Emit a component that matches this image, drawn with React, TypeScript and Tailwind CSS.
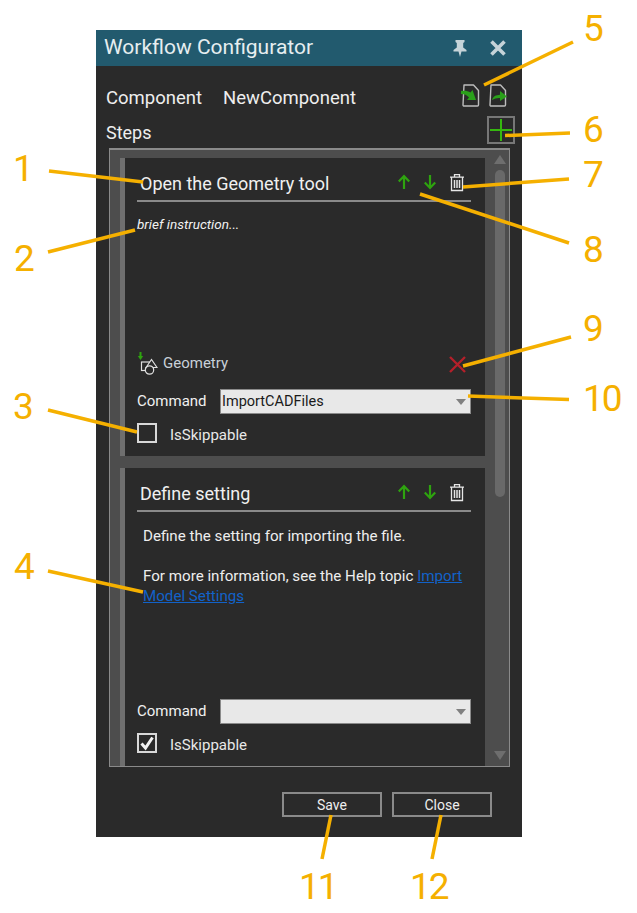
import React from 'react';

// Callout numbers around the dialog: [label, left, top]
const callouts: [string, number, number][] = [
  ['1', 13, 147],
  ['2', 14, 237],
  ['3', 13, 385],
  ['4', 14, 545],
  ['5', 583, 7],
  ['6', 583, 108],
  ['7', 583, 153],
  ['8', 583, 228],
  ['9', 583, 307],
  ['10', 583, 377],
  ['11', 299, 865],
  ['12', 410, 865],
];

const calloutLines = [
  [49, 171, 143, 182],
  [48, 252, 135, 230],
  [48, 410, 137, 432],
  [48, 571, 143, 592],
  [573, 42, 484, 85],
  [570, 133, 505, 135.5],
  [569, 179, 463, 187],
  [569, 243, 420, 194],
  [571, 337, 463, 366],
  [569, 399.5, 468, 396],
  [331, 815, 322, 859],
  [441, 815, 432, 859],
];

const ArrowUp = () => (
  <svg width="14" height="16" viewBox="0 0 14 16" fill="none" stroke="#2ea30f" strokeWidth="2.2">
    <path d="M7 15V2M1.8 7.5 7 2l5.2 5.5" />
  </svg>
);

const ArrowDown = () => (
  <svg width="14" height="16" viewBox="0 0 14 16" fill="none" stroke="#2ea30f" strokeWidth="2.2">
    <path d="M7 1v13M1.8 8.5 7 14l5.2-5.5" />
  </svg>
);

const Trash = () => (
  <svg width="16" height="19" viewBox="0 0 16 19" fill="none" stroke="#e6e6e6" strokeWidth="1.3">
    <path d="M1 4.2h14M5.5 4V1.6h5V4M2.5 4.5v13h11v-13" />
    <path d="M5.5 7v8M8 7v8M10.5 7v8" strokeWidth="1.5" />
  </svg>
);

const StepHeader = ({ title }: { title: string }) => (
  <div className="flex items-center h-[44px] pt-[6px] border-b-2 border-[#8a8a8a] pl-[3px] pr-[6px]">
    <span className="flex-1 pt-[4px] text-[18px] text-[#f0f0f0] leading-none">{title}</span>
    <div className="flex items-center gap-[12px]">
      <ArrowUp />
      <ArrowDown />
      <Trash />
    </div>
  </div>
);

const CommandRow = ({ value }: { value: string }) => (
  <div className="flex items-center">
    <span className="w-[83px] text-[15px] text-[#f0f0f0]">Command</span>
    <div className="flex items-center w-[251px] h-[25px] bg-[#e8e8e8] border border-[#8a8a8a] pl-[1px] pr-[4px]">
      <span className="flex-1 text-[14.5px] text-[#1a1a1a] leading-none pt-[2px]">{value}</span>
      <span className="w-0 h-0 border-x-[5px] border-x-transparent border-t-[6px] border-t-[#808080]" />
    </div>
  </div>
);

const SkipRow = ({ checked }: { checked?: boolean }) => (
  <div className="flex items-start mt-[9px]">
    <div className="flex items-center justify-center w-[20px] h-[20px] border-2 border-[#d8d8d8]">
      {checked && (
        <svg width="16" height="16" viewBox="0 0 16 16" fill="none" stroke="#f2f2f2" strokeWidth="3">
          <path d="M2.5 8.5 6.5 13 13.5 2.5" />
        </svg>
      )}
    </div>
    <span className="ml-[13px] pt-[1px] text-[15px] text-[#e8e8e8]">IsSkippable</span>
  </div>
);

const GeometryIcon = () => (
  <svg width="21" height="24" viewBox="0 0 21 24" fill="none" stroke="#e0e0e0" strokeWidth="1.2">
    <path d="M3.5 1v5" stroke="#2ea30f" strokeWidth="2" />
    <path d="M.8 5 3.5 9 6.2 5z" fill="#2ea30f" stroke="none" />
    <rect x="4.500" y="11" width="8" height="8.500" />
    <path d="M9 16.500 14.500 8.500l5.500 8z" fill="#2a2a2a" />
    <circle cx="12.500" cy="19" r="4.200" fill="#2a2a2a" />
  </svg>
);

const FileIcon = ({ flip }: { flip?: boolean }) => (
  <svg width="20" height="23" viewBox="0 0 20 23" fill="none">
    <path d="M3 1h9.500l5 5.500V21a1 1 0 0 1-1 1H3a1 1 0 0 1-1-1z" stroke="#bdbdbd" strokeWidth="1.4" strokeLinejoin="round" />
    {flip ? (
      <path d="M4 16c1-3.500 4-5 8-5.200V7l7 5.500-7 4.500v-3c-3-.2-5.500.5-8 2z" fill="#2aa01a" />
    ) : (
      <path d="M0 7c4-.5 7 0 9.500 1.500L11.500 6 15 16H6l2-2.500C6 11 3.500 10 0 10z" fill="#2aa01a" />
    )}
  </svg>
);

export default function App() {
  return (
    <div className="relative w-[637px] h-[913px] overflow-hidden bg-white pt-[30px] pl-[96px] font-['Roboto',sans-serif]">
      <div className="flex flex-col w-[426px] h-[807px] bg-[#2a2a2a]">
        {/* title bar */}
        <div className="flex items-center h-[36px] bg-[#225a6e] pl-[8px] pr-[16px] shrink-0">
          <span className="flex-1 pb-[2px] text-[21px] text-[#e6eef0] leading-none">Workflow Configurator</span>
          <svg width="14" height="17" viewBox="0 0 14 17" fill="#c5d3d8" className="mr-[23px]">
            <path d="M2.5 0h9v2l-1.300 1v4.500L13.500 10v1.500h-5L7 17l-1.500-5.500h-5V10l3.300-2.500V3L2.500 2z" />
          </svg>
          <svg width="16" height="16" viewBox="0 0 16 16" stroke="#c5d3d8" strokeWidth="3.6">
            <path d="M1.5 1.500l13 13M14.500 1.500l-13 13" />
          </svg>
        </div>

        {/* component name + import/export */}
        <div className="flex items-center h-[38px] mt-[12px] pl-[10px] pr-[14px] shrink-0">
          <span className="w-[117px] pt-[4px] text-[18.5px] text-[#eeeeee]">Component</span>
          <span className="flex-1 pt-[4px] text-[18.5px] text-[#eeeeee]">NewComponent</span>
          <div className="flex gap-[7px] -mt-[4px]">
            <FileIcon />
            <FileIcon flip />
          </div>
        </div>

        <div className="flex items-center justify-between h-[28px] pl-[10px] pr-[7px] mb-[4px] shrink-0">
          <span className="pt-[4px] text-[18px] text-[#eeeeee]">Steps</span>
          <div className="flex items-center justify-center w-[28px] h-[28px] border-2 border-[#777777]">
            <svg width="22" height="22" viewBox="0 0 22 22" stroke="#35b80f" strokeWidth="2">
              <path d="M11 0v22M0 11h22" />
            </svg>
          </div>
        </div>

        {/* step list */}
        <div className="flex ml-[13px] w-[401px] h-[619px] border border-[#8a8a8a] border-t-2 bg-[#4d4d4d] overflow-hidden shrink-0">
          <div className="flex-1 min-w-0 pt-[8px] pl-[10px]">
            <div className="flex border-l-[5px] border-[#6f6f6f] h-[298px]">
              <div className="flex flex-col flex-1 bg-[#2a2a2a] pl-[12px] pr-[14px]">
                <StepHeader title="Open the Geometry tool" />
                <p className="mt-[16px] h-[14px] text-[13.5px] italic text-[#f2f2f2] leading-none">brief instruction...</p>
                <div className="flex items-center mt-[120px] h-[22px] pr-[5px]">
                  <GeometryIcon />
                  <span className="flex-1 ml-[5px] pt-[1px] text-[15px] text-[#c8d0d8]">Geometry</span>
                  <svg width="17" height="17" viewBox="0 0 17 17" stroke="#b3202a" strokeWidth="2.4" className="mt-[3px]">
                    <path d="M1 1l15 15M16 1 1 16" />
                  </svg>
                </div>
                <div className="mt-[15px]">
                  <CommandRow value="ImportCADFiles" />
                </div>
                <SkipRow />
              </div>
            </div>
            <div className="flex border-l-[5px] border-[#6f6f6f] h-[310px] mt-[12px]">
              <div className="flex flex-col flex-1 bg-[#2a2a2a] pl-[12px] pr-[14px]">
                <StepHeader title="Define setting" />
                <div className="mt-[14px] ml-[6px] text-[15.15px] text-[#eeeeee] leading-[20px]">
                  <p>Define the setting for importing the file.</p>
                  <p className="mt-[20px]">
                    For more information, see the Help topic <span className="text-[#1262c8] underline">Import</span>
                  </p>
                  <p className="text-[#1262c8] underline">Model Settings</p>
                </div>
                <div className="mt-[93px]">
                  <CommandRow value="" />
                </div>
                <SkipRow checked />
              </div>
            </div>
          </div>

          {/* scrollbar */}
          <div className="flex flex-col items-center w-[24px] shrink-0 pt-[5px] pl-[6px]">
            <span className="w-0 h-0 border-x-[6px] border-x-transparent border-b-[9px] border-b-[#6e6e6e]" />
            <div className="w-[10px] h-[327px] mt-[6px] rounded-full bg-[#696969]" />
            <span className="mt-auto mb-[6px] w-0 h-0 border-x-[6px] border-x-transparent border-t-[9px] border-t-[#6e6e6e]" />
          </div>
        </div>

        {/* footer */}
        <div className="flex justify-end gap-[10px] mt-[25px] pr-[30px]">
          <div className="flex items-center justify-center w-[100px] h-[25px] pt-[2px] border-2 border-[#8a8a8a] text-[14px] text-[#eeeeee]">Save</div>
          <div className="flex items-center justify-center w-[100px] h-[25px] pt-[2px] border-2 border-[#8a8a8a] text-[14px] text-[#eeeeee]">Close</div>
        </div>
      </div>

      {/* callouts over the dialog */}
      <svg width="637" height="913" className="absolute left-0 top-0 pointer-events-none" stroke="#f5b000" strokeWidth="3.5">
        {calloutLines.map(([x1, y1, x2, y2], i) => (
          <line key={i} x1={x1} y1={y1} x2={x2} y2={y2} />
        ))}
      </svg>
      {callouts.map(([label, left, top]) => (
        <span
          key={label}
          className={`absolute text-[37px] leading-[44px] text-[#f5b000] ${label.length > 1 ? 'tracking-[-2px]' : ''}`}
          style={{ left, top }}
        >
          {label}
        </span>
      ))}
    </div>
  );
}
